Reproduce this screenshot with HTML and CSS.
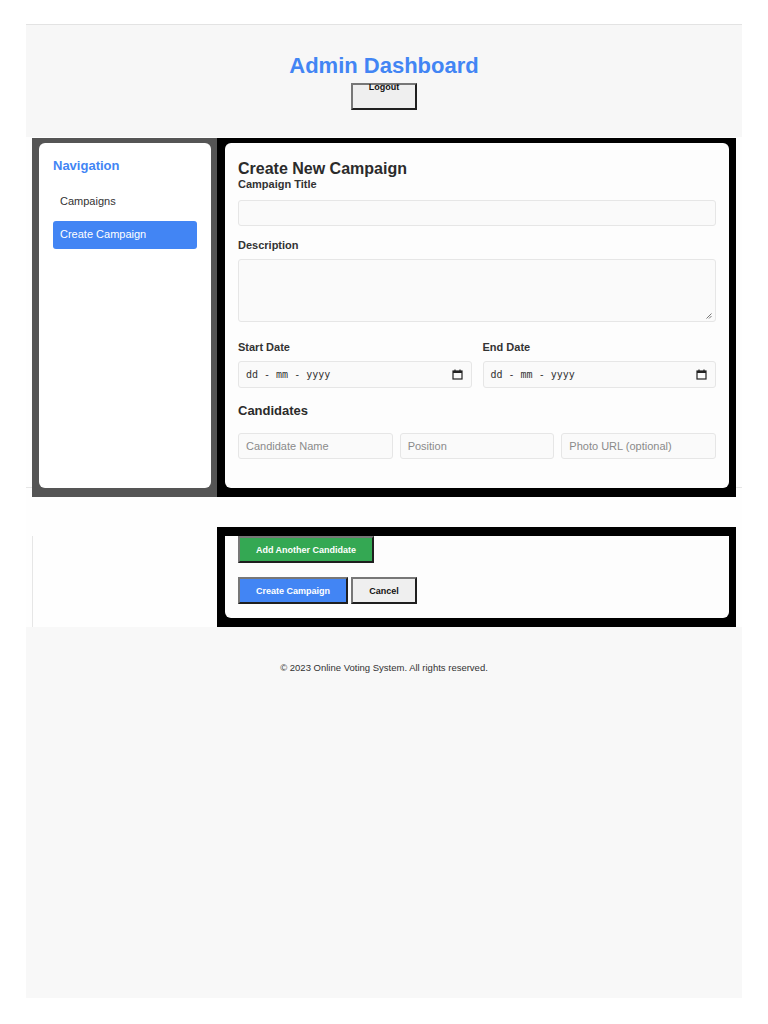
FILE: index.html
```html
<!DOCTYPE html>
<html lang="en">
<head>
<meta charset="utf-8">
<title>Admin Dashboard</title>
<link rel="stylesheet" href="styles.css">
</head>
<body>
<div class="page">
  <header class="header">
    <h1 class="header-title">Admin Dashboard</h1>
    <button class="btn btn-plain btn-logout" type="button">Logout</button>
  </header>

  <div class="content">
    <div class="row-top">
      <div class="grid">
        <aside class="side-frame">
          <nav class="side-card">
            <h3 class="nav-title">Navigation</h3>
            <a class="nav-item">Campaigns</a>
            <a class="nav-item nav-item-active">Create Campaign</a>
          </nav>
        </aside>
        <section class="main-frame">
          <div class="main-card">
            <h2 class="card-title">Create New Campaign</h2>
            <label class="label">Campaign Title</label>
            <div class="input input-title"></div>

            <label class="label label-desc">Description</label>
            <div class="input textarea">
              <svg class="resize" width="6" height="6" viewBox="0 0 6 6"><path d="M5.5 0.5 L0.5 5.5 M5.5 3 L3 5.5" stroke="#777" stroke-width="1" fill="none"/></svg>
            </div>

            <div class="dates">
              <div class="date-field">
                <label class="label">Start Date</label>
                <div class="input date">
                  <span class="date-text">dd - mm - yyyy</span>
                  <svg class="cal" width="11" height="11" viewBox="0 0 11 11"><rect x="1" y="2" width="9" height="8" fill="none" stroke="#222" stroke-width="1.2"/><rect x="1" y="2" width="9" height="2" fill="#222"/><path d="M3 0.5 V2 M8 0.5 V2" stroke="#222" stroke-width="1.2"/></svg>
                </div>
              </div>
              <div class="date-field">
                <label class="label">End Date</label>
                <div class="input date">
                  <span class="date-text">dd - mm - yyyy</span>
                  <svg class="cal" width="11" height="11" viewBox="0 0 11 11"><rect x="1" y="2" width="9" height="8" fill="none" stroke="#222" stroke-width="1.2"/><rect x="1" y="2" width="9" height="2" fill="#222"/><path d="M3 0.5 V2 M8 0.5 V2" stroke="#222" stroke-width="1.2"/></svg>
                </div>
              </div>
            </div>

            <h3 class="cand-title">Candidates</h3>
            <div class="cands">
              <div class="input cand"><span class="ph">Candidate Name</span></div>
              <div class="input cand"><span class="ph">Position</span></div>
              <div class="input cand"><span class="ph">Photo URL (optional)</span></div>
            </div>
          </div>
        </section>
      </div>
    </div>

    <div class="row-bottom">
      <div class="side-rest"></div>
      <section class="main-frame main-frame-2">
        <div class="main-card main-card-2">
          <button class="btn btn-green" type="button">Add Another Candidate</button>
          <div class="actions">
            <button class="btn btn-blue" type="button">Create Campaign</button>
            <button class="btn btn-plain" type="button">Cancel</button>
          </div>
        </div>
      </section>
    </div>
  </div>

  <footer class="footer">
    <p class="footer-text">© 2023 Online Voting System. All rights reserved.</p>
  </footer>
</div>
</body>
</html>
```

FILE: styles.css
```css
* { box-sizing: border-box; }

html, body {
  margin: 0;
  padding: 0;
  background: #ffffff;
  font-family: "Liberation Sans", Arial, sans-serif;
  color: #333;
}

.page {
  margin: 24px 26px 0;
  height: 974px;
  border-top: 1px solid #e3e3e3;
  background: #f8f8f8;
  display: flex;
  flex-direction: column;
}

/* Header */
.header {
  background: #f7f7f7;
  text-align: center;
  padding: 28px 0 25px;
  height: 112px;
}

.header-title {
  margin: 0 0 4px;
  font-size: 22px;
  line-height: 26px;
  font-weight: bold;
  color: #4285f4;
}

.btn {
  font-family: "Liberation Sans", Arial, sans-serif;
  font-size: 9px;
  font-weight: bold;
  height: 27px;
  padding: 0;
  border: 2px solid;
  border-color: #777 #1f1f1f #1f1f1f #777;
  border-radius: 0;
  cursor: pointer;
  vertical-align: top;
  white-space: nowrap;
  text-align: center;
}

.btn-plain {
  background: #efefef;
  color: #111;
}

.btn-logout {
  padding: 0 0 19px;
  line-height: 4px;
  width: 66px;
}

.btn-green {
  background: #34a853;
  color: #fff;
  display: block;
  width: 136px;
}

.btn-blue {
  background: #4285f4;
  color: #fff;
  width: 110px;
}

.actions .btn-plain {
  width: 66px;
}

/* Content */
.content {
  background: #fefefe;
}

.row-top {
  padding: 1px 6px 0;
  border-bottom: 1px solid #e6e6e6;
}

.grid {
  display: flex;
  height: 359px;
  margin-bottom: -10px;
}

.side-frame {
  width: 185px;
  background: #555;
  padding: 5px 6px 9px 7px;
}

.side-card {
  height: 100%;
  background: #fff;
  border-radius: 6px;
  padding: 15px 14px;
}

.nav-title {
  margin: 0 0 13px;
  font-size: 13px;
  line-height: 16px;
  font-weight: bold;
  color: #4285f4;
}

.nav-item {
  display: block;
  height: 28px;
  padding: 7px 7px;
  font-size: 11px;
  line-height: 14px;
  color: #333;
  border-radius: 3px;
  margin-bottom: 6px;
}

.nav-item-active {
  background: #4285f4;
  color: #fff;
  padding-top: 6px;
}

.main-frame {
  flex: 1;
  background: #000;
  padding: 5px 7px 9px 8px;
}

.main-card {
  height: 100%;
  background: #fdfdfd;
  border-radius: 6px;
  padding: 16px 13px 15px;
}

.card-title {
  margin: 0;
  font-size: 16px;
  line-height: 19px;
  font-weight: bold;
  color: #2b2b2b;
}

.label {
  display: block;
  font-size: 11px;
  line-height: 13px;
  font-weight: bold;
  color: #333;
}

.input {
  background: #fafafa;
  border: 1px solid #e6e6e6;
  border-radius: 3px;
}

.input-title {
  margin-top: 9px;
  height: 26px;
}

.label-desc {
  margin-top: 13px;
}

.textarea {
  margin-top: 7px;
  height: 63px;
  position: relative;
}

.resize {
  position: absolute;
  right: 3px;
  bottom: 2px;
}

.dates {
  display: grid;
  grid-template-columns: 1fr 1fr;
  column-gap: 11px;
  margin-top: 19px;
}

.date {
  margin-top: 7px;
  height: 27px;
  display: flex;
  align-items: center;
  justify-content: space-between;
  padding: 0 8px 0 7px;
}

.date-text {
  font-family: "DejaVu Sans Mono", "Liberation Mono", monospace;
  font-size: 10px;
  color: #333;
}

.cal {
  display: block;
}

.cand-title {
  margin: 15px 0 0;
  font-size: 13px;
  line-height: 15px;
  font-weight: bold;
  color: #2b2b2b;
}

.cands {
  display: grid;
  grid-template-columns: 1fr 1fr 1fr;
  column-gap: 7px;
  margin-top: 15px;
}

.cand {
  height: 26px;
  padding: 2px 7px 0;
}

.ph {
  font-size: 11px;
  line-height: 14px;
  color: #8a8a8a;
}

/* Second row */
.row-bottom {
  display: flex;
  padding: 0 6px;
  margin-top: 39px;
}

.side-rest {
  width: 185px;
  margin-top: 9px;
  border-left: 1px solid #e6e6e6;
}

.main-frame-2 {
  height: 100px;
  padding: 9px 7px 9px 8px;
}

.main-card-2 {
  border-radius: 0 0 6px 6px;
  padding: 0 13px;
}

.actions {
  margin-top: 14px;
  display: flex;
  gap: 3px;
}

/* Footer */
.footer {
  flex: 1;
  background: #f8f8f8;
  text-align: center;
  padding-top: 35px;
}

.footer-text {
  margin: 0;
  font-size: 9.5px;
  line-height: 12px;
  color: #333;
}
```
